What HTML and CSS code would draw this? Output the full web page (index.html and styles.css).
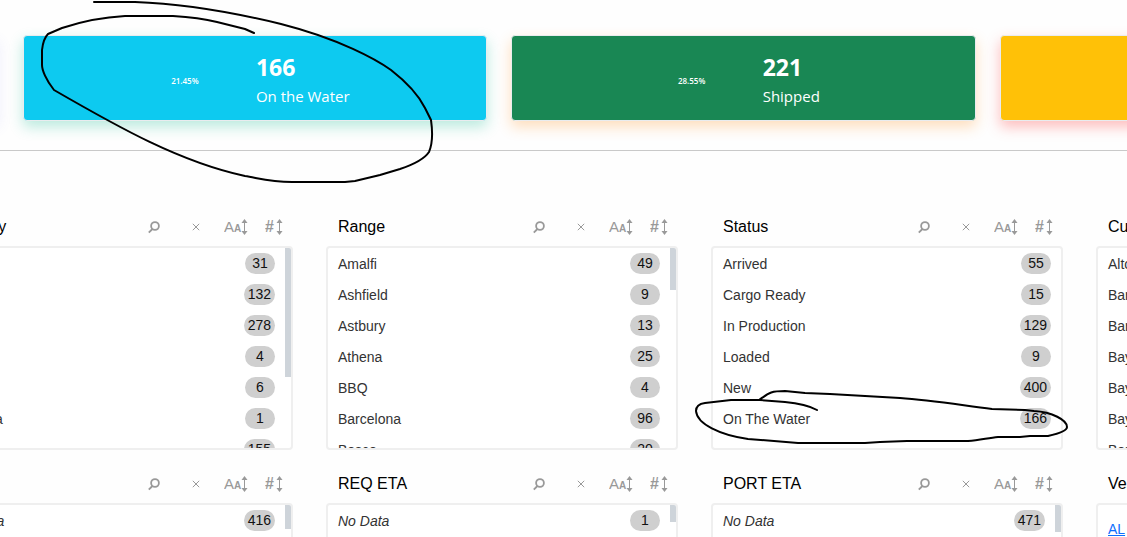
FILE: index.html
```html
<!DOCTYPE html>
<html lang="en">
<head>
<meta charset="utf-8">
<title>Shipment overview</title>
<link rel="stylesheet" href="styles.css">
</head>
<body>
<main class="page">
  <section class="cards" aria-label="Totals">
    <article class="card card-first"></article>
    <article class="card card-info">
      <div class="percent">21.45%</div>
      <div><div class="count">166</div><div class="caption">On the Water</div></div>
    </article>
    <article class="card card-success">
      <div class="percent">28.55%</div>
      <div><div class="count">221</div><div class="caption">Shipped</div></div>
    </article>
    <article class="card card-warning"></article>
  </section>
  <hr class="divider">
  <section class="panes" id="panes" aria-label="Filters"></section>
  <svg class="ink" width="1127" height="537" viewBox="0 0 1127 537" aria-hidden="true">
    <path d="M94 2H135C190 4 240 14 281 24C340 39 377 60 391 70C409 84 420 98 425 108L431 120C433 134 432 145 429 152C425 158 418 163 400 169L380 175L355 181L345 182H292C270 182 258 178 245 176C180 162 118 127 54 90C46 80 42 70 42 65V50C43 41 45 37 48 34L62 28C86 20 106 17 125 16H173C190 17 205 19 217 22L245 29L254 33"/>
    <path d="M817 410C808 405 796 403 785 402L760 400H731L705 403C698 404 696 407 696 411C697 424 720 435 748 439L798 443H865L880 442L907 441H968C980 440 988 438 998 437H1020L1030 436H1048C1057 434 1067 431 1067 427C1067 420 1052 412 1034 411L1025 410L992 409C960 405 930 400 900 398L830 394L805 393L785 391C770 391 769 393 759 400"/>
  </svg>
</main>
<script src="panes.js"></script>
</body>
</html>
```
FILE: styles.css
```css
* { box-sizing: border-box; }
body {
  margin: 0;
  background: #fefefe;
  color: #000;
  font-family: "Liberation Sans", Arial, sans-serif;
}
.page {
  position: relative;
  height: 100vh;
  padding-top: 35px;
  overflow: hidden;
}
.cards {
  display: grid;
  grid-template-columns: repeat(4, 1fr);
  gap: 24px;
  margin: 0 -337px 0 -466px;
}
.card {
  display: flex;
  align-items: center;
  justify-content: center;
  gap: 46px;
  height: 86px;
  padding-top: 4px;
  border: 1px solid #e9ecef;
  border-radius: 4px;
  color: #fff;
  font-family: "Open Sans", "Noto Sans", sans-serif;
}
.card-first { background: #0d6efd; box-shadow: 0 6px 14px rgba(100, 100, 240, 0.1); }
.card-info { background: #0dcaf0; box-shadow: 0 6px 14px rgba(30, 190, 150, 0.3); }
.card-success { background: #198754; box-shadow: 0 6px 14px rgba(255, 150, 40, 0.3); }
.card-warning { background: #ffc107; box-shadow: 0 6px 14px rgba(255, 70, 70, 0.35); }
.percent {
  width: 50px;
  text-align: center;
  font-size: 8px;
  font-weight: 600;
}
.count { font-size: 23px; font-weight: 700; line-height: 32px; }
.caption { font-size: 15px; line-height: 26px; }
.divider {
  height: 1px;
  margin: 29px 0 55px;
  border: 0;
  background: #c9c9c9;
}
.panes {
  display: grid;
  grid-template-columns: repeat(4, 1fr);
  gap: 13px 33px;
  margin: 0 -321px 0 -59px;
}
.pane-head {
  display: flex;
  align-items: center;
  height: 40px;
  padding: 2px 0 0 12px;
}
.pane-title {
  flex: 1;
  margin: 0;
  font-size: 16px;
  font-weight: 400;
}
.tool {
  display: flex;
  align-items: center;
  justify-content: center;
  width: 42px;
  height: 24px;
  padding: 0;
  border: 0;
  background: none;
  color: #999;
}
.tool-sort { width: 38px; }
.tool svg { display: block; fill: none; stroke: currentColor; }
.tool text { fill: currentColor; stroke: none; font-family: "Liberation Sans", Arial, sans-serif; }
.tool .heads { fill: currentColor; stroke: none; }
.pane-body {
  position: relative;
  height: 204px;
  border: 2px solid #efefef;
  border-radius: 4px;
  overflow: hidden;
  background: #fff;
}
.rows { margin: 0; padding: 0; list-style: none; }
.scrolls .rows { padding-right: 6px; }
.row {
  display: flex;
  align-items: center;
  justify-content: space-between;
  height: 31px;
  padding: 0 10px;
  color: #333;
  font-size: 14px;
  line-height: 18px;
}
.row-empty { font-style: italic; }
.row-link { height: 47px; }
.row-link a { color: #0d6efd; }
.pill {
  min-width: 30px;
  padding: 0 4px;
  border-radius: 11px;
  background: #cfcfcf;
  color: #111;
  font-style: normal;
  line-height: 21px;
  text-align: center;
}
.thumb {
  position: absolute;
  top: 0;
  right: 0;
  width: 6px;
  background: #ced4da;
}
.ink {
  position: absolute;
  top: 0;
  left: 0;
  fill: none;
  stroke: #000;
  stroke-width: 2;
  stroke-linecap: round;
  stroke-linejoin: round;
  pointer-events: none;
}
```
FILE: panes.js
```js
const panes = [
  { title: "Factory", thumb: 129, rows: [["", 31], ["", 132], ["", 278], ["", 4], ["", 6], ["Georgia", 1], ["", 155]] },
  { title: "Range", thumb: 42, rows: [["Amalfi", 49], ["Ashfield", 9], ["Astbury", 13], ["Athena", 25], ["BBQ", 4], ["Barcelona", 96], ["Bosco", 20]] },
  { title: "Status", thumb: 0, rows: [["Arrived", 55], ["Cargo Ready", 15], ["In Production", 129], ["Loaded", 9], ["New", 400], ["On The Water", 166]] },
  { title: "Cust", thumb: 0, rows: [["Alto"], ["Bar"], ["Bar"], ["Bay"], ["Bay"], ["Bay"], ["Bor"]] },
  { title: "", thumb: 24, rows: [["No Data", 416]] },
  { title: "REQ ETA", thumb: 17, rows: [["No Data", 1]] },
  { title: "PORT ETA", thumb: 27, rows: [["No Data", 471]] },
  { title: "Vess", thumb: 0, link: true, rows: [["AL"]] }
];

const arrow = (x) => `<path d="M${x} 4V16"/><path class="heads" d="M${x} 2L${x + 3} 6H${x - 3}ZM${x} 18L${x + 3} 14H${x - 3}Z"/>`;

const tools = `
  <button class="tool" type="button" aria-label="Search"><svg width="12" height="14" viewBox="0 0 12 14" stroke-width="1.8"><circle cx="7" cy="6" r="3.9"/><path d="M4.4 9L.8 12.6"/></svg></button>
  <button class="tool" type="button" aria-label="Clear"><svg width="8" height="8" viewBox="0 0 8 8"><path d="M.8.8L7.2 7.2M7.2.8L.8 7.2"/></svg></button>
  <button class="tool tool-sort" type="button" aria-label="Sort by name"><svg width="24" height="20" viewBox="0 0 24 20"><text x="0" y="15" font-size="15" stroke-width="0">A<tspan font-size="10" font-weight="700">A</tspan></text>${arrow(20.5)}</svg></button>
  <button class="tool tool-sort" type="button" aria-label="Sort by count"><svg width="18" height="20" viewBox="0 0 18 20"><text x="0" y="15" font-size="16" font-weight="700">#</text>${arrow(14.5)}</svg></button>`;

document.getElementById("panes").innerHTML = panes.map((pane) => {
  const rows = pane.rows.map(([name, count]) => {
    const kind = pane.link ? " row-link" : name === "No Data" ? " row-empty" : "";
    const label = pane.link ? `<a href="#">${name}</a>` : `<span>${name}</span>`;
    const pill = count === undefined ? "" : `<span class="pill">${count}</span>`;
    return `<li class="row${kind}">${label}${pill}</li>`;
  }).join("");
  const thumb = pane.thumb ? `<div class="thumb" style="height:${pane.thumb}px"></div>` : "";
  return `<section><header class="pane-head"><h2 class="pane-title">${pane.title}</h2>${tools}</header>
    <div class="pane-body${pane.thumb ? " scrolls" : ""}"><ul class="rows">${rows}</ul>${thumb}</div></section>`;
}).join("");
```
